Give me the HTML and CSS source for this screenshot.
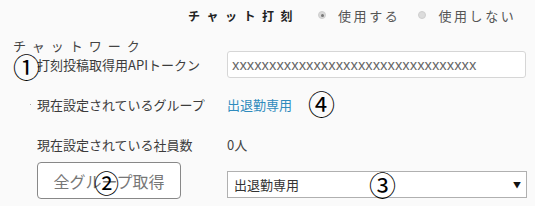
FILE: index.html
```html
<!DOCTYPE html>
<html lang="ja">
<head>
<meta charset="utf-8">
<link rel="stylesheet" href="styles.css">
</head>
<body>
<div class="panel">
  <div class="head-row">
    <span class="head-title">チャット打刻</span>
    <label class="radio"><span class="dot checked"></span>使用する</label>
    <label class="radio"><span class="dot"></span>使用しない</label>
  </div>
  <div class="section-title">チャットワーク</div>
  <div class="row token-row">
    <span class="label">打刻投稿取得用APIトークン</span>
    <div class="input">xxxxxxxxxxxxxxxxxxxxxxxxxxxxxxxxx</div>
    <span class="mark mark1">①</span>
  </div>
  <div class="row group-row">
    <span class="bullet"></span>
    <span class="label">現在設定されているグループ</span>
    <a class="link">出退勤専用</a>
    <span class="mark mark4">④</span>
  </div>
  <div class="row count-row">
    <span class="label">現在設定されている社員数</span>
    <span class="value">0人</span>
  </div>
  <div class="row action-row">
    <div class="button">全グループ取得</div>
    <div class="select"><span>出退勤専用</span><span class="arrow">▼</span></div>
    <span class="mark mark2">②</span>
    <span class="mark mark3">③</span>
  </div>
</div>
</body>
</html>
```
FILE: styles.css
```css
html, body {
  margin: 0;
  padding: 0;
  background: #ffffff;
}
body {
  width: 541px;
  height: 218px;
  overflow: hidden;
  font-family: "Noto Sans CJK JP", "Noto Sans", sans-serif;
  color: #3a3a3a;
}
.panel {
  position: relative;
  width: 535px;
  height: 206px;
  background: #fafafa;
}
.head-row {
  height: 30px;
  display: flex;
  align-items: center;
  padding-left: 188px;
  box-sizing: border-box;
  white-space: nowrap;
}
.head-title {
  font-size: 12px;
  font-weight: bold;
  letter-spacing: 6.5px;
  color: #222;
  width: 130px;
  flex: none;
}
.radio {
  display: flex;
  align-items: center;
  flex: none;
  font-size: 13px;
  letter-spacing: 2.6px;
  color: #555;
  margin-right: 18px;
}
.dot {
  width: 8px;
  height: 8px;
  border-radius: 50%;
  background: #dcdcdc;
  border: 1px solid #cfcfcf;
  margin-right: 12px;
  box-sizing: border-box;
  position: relative;
  flex: none;
}
.dot.checked {
  background: #d8d8d8;
}
.dot.checked::after {
  content: "";
  position: absolute;
  left: 1.5px;
  top: 1.5px;
  width: 3px;
  height: 3px;
  border-radius: 50%;
  background: #777;
}
.section-title {
  height: 12px;
  margin-top: 9px;
  padding-left: 13px;
  font-size: 13px;
  line-height: 13px;
  letter-spacing: 6px;
  color: #444;
  white-space: nowrap;
}
.row {
  position: relative;
  display: flex;
  align-items: center;
}
.label {
  font-size: 13px;
  color: #3c3c3c;
  width: 190px;
  flex: none;
}
.token-row {
  height: 27px;
  padding-left: 37px;
}
.input {
  width: 299px;
  height: 27px;
  box-sizing: border-box;
  border: 1px solid #d6d6d6;
  border-radius: 3px;
  background: #fff;
  font-family: "Noto Sans", sans-serif;
  font-size: 14px;
  line-height: 25px;
  padding-left: 4px;
  color: #666;
  overflow: hidden;
  white-space: nowrap;
}
.group-row {
  height: 52px;
  padding-left: 37px;
}
.bullet {
  position: absolute;
  left: 30px;
  top: 26px;
  width: 1px;
  height: 1px;
  background: #aaa;
}
.link {
  font-size: 13px;
  color: #2f8bbd;
}
.count-row {
  height: 28px;
  padding-left: 37px;
}
.value {
  font-size: 13px;
  color: #444;
}
.action-row {
  margin-top: 4px;
  padding-left: 37px;
  align-items: flex-end;
  height: 37px;
}
.button {
  width: 144px;
  height: 37px;
  box-sizing: border-box;
  border: 1px solid #888;
  border-radius: 4px;
  background: #fff;
  font-size: 16px;
  color: #777;
  display: flex;
  align-items: center;
  justify-content: center;
  margin-right: 46px;
}
.select {
  width: 300px;
  height: 27px;
  margin-bottom: 1px;
  box-sizing: border-box;
  border: 1px solid #b0b0b0;
  background: #fff;
  font-size: 13px;
  color: #333;
  display: flex;
  align-items: center;
  justify-content: space-between;
  padding: 0 5px 0 6px;
}
.arrow {
  font-size: 8px;
  color: #111;
}
.mark {
  position: absolute;
  font-family: "Noto Sans CJK JP", sans-serif;
  color: #000;
  line-height: 1;
}
.mark1 {
  left: 13px;
  top: 2px;
  font-size: 27px;
}
.mark4 {
  left: 308px;
  top: 12px;
  font-size: 27px;
}
.mark2 {
  left: 94px;
  top: 8px;
  font-size: 25px;
}
.mark3 {
  left: 369px;
  top: 9px;
  font-size: 27px;
}
```
